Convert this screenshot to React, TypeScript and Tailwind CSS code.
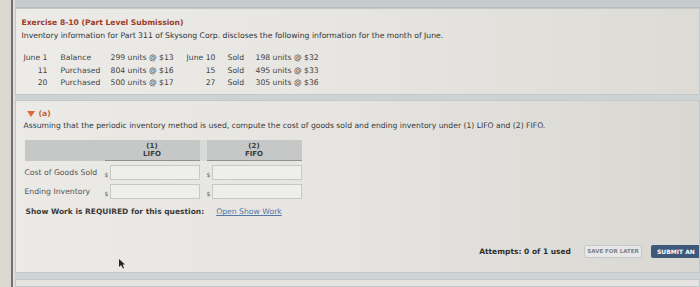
import React from "react";

const font = { fontFamily: '"DejaVu Sans", Verdana, sans-serif' };

function DataRow({ a, b, c, d, e, f }: { a: string; b: string; c: string; d: string; e: string; f: string }) {
  return (
    <div className="grid grid-cols-[26px_63px_75px_30px_40px_auto] h-[12.5px] items-center">
      <div className="text-right">{a}</div>
      <div className="pl-[13px]">{b}</div>
      <div>{c}</div>
      <div className="text-right">{d}</div>
      <div className="pl-[12px]">{e}</div>
      <div>{f}</div>
    </div>
  );
}

function Input() {
  return <div className="w-[90px] h-[15px] bg-[#eeeeeb] border border-[#c6c9c7]" />;
}

export default function App() {
  return (
    <div
      className="relative w-[700px] h-[287px] overflow-hidden flex bg-[#d2d6d5] text-[#3a3a3a] text-[7.7px] leading-none"
      style={font}
    >
      <div className="w-[11px] bg-[#dbd8d1]" />
      <div className="w-[1.5px] bg-[#6e7273]" />
      <div className="w-[2px] bg-[#e0deda]" />
      <div className="flex-1 flex flex-col">
        <div className="h-[8px] bg-[#c5cdcc] border-b border-[#b6bfbe]" />
        {/* Panel 1 */}
        <div className="h-[87px] border border-[#c3c9c8] bg-gradient-to-r from-[#ecebe7] via-[#e6e5e1] to-[#dddbd6] pl-[6px] pt-[9px]">
          <div className="h-[10px] flex items-center text-[7.6px] font-bold text-[#9b3b2b]">
            Exercise 8-10 (Part Level Submission)
          </div>
          <div className="mt-[3px] h-[10px] flex items-center text-[#333]">
            Inventory information for Part 311 of Skysong Corp. discloses the following information for the month of June.
          </div>
          <div className="mt-[11px] text-[#444]">
            <DataRow a="June 1" b="Balance" c="299 units @ $13" d="June 10" e="Sold" f="198 units @ $32" />
            <DataRow a="11" b="Purchased" c="804 units @ $16" d="15" e="Sold" f="495 units @ $33" />
            <DataRow a="20" b="Purchased" c="500 units @ $17" d="27" e="Sold" f="305 units @ $36" />
          </div>
        </div>
        <div className="h-[5px] bg-[#cdd3d2]" />
        {/* Panel 2 */}
        <div className="h-[173px] border border-[#c3c9c8] bg-gradient-to-r from-[#ebeae6] via-[#e5e4e0] to-[#d9d7d2] pl-[8px] pr-[4px] pt-[8px] flex flex-col">
          <div className="h-[10px] flex items-center gap-[4px] pl-[3px]">
            <svg width="8" height="6" viewBox="0 0 8 6">
              <polygon points="0,0 8,0 4,6" fill="#e2683a" />
            </svg>
            <span className="font-bold text-[#c4613a]">(a)</span>
          </div>
          <div className="mt-[2px] h-[10px] flex items-center text-[#3a3a3a] text-[7.65px]">
            Assuming that the periodic inventory method is used, compute the cost of goods sold and ending inventory under (1) LIFO and (2) FIFO.
          </div>
          {/* table */}
          <div className="mt-[9px] w-[277px] ml-[1px]">
            <div className="h-[21px] bg-[#c5c8c6] flex">
              <div className="w-[80px]" />
              <div className="w-[95px] flex flex-col items-center justify-center gap-[1px] border-b border-[#8d9293] font-bold text-[#3c3c3c] text-[7px]">
                <span>(1)</span>
                <span>LIFO</span>
              </div>
              <div className="w-[7px] bg-[#d9dbd9]" />
              <div className="w-[95px] flex flex-col items-center justify-center gap-[1px] border-b border-[#8d9293] font-bold text-[#3c3c3c] text-[7px]">
                <span>(2)</span>
                <span>FIFO</span>
              </div>
            </div>
            <div className="mt-[4px] flex items-center h-[15px]">
              <div className="w-[80px] text-[#555]">Cost of Goods Sold</div>
              <span className="w-[5px] text-[6px] text-[#666] mt-[5px]">$</span>
              <Input />
              <span className="w-[5px] ml-[7px] text-[6px] text-[#666] mt-[5px]">$</span>
              <Input />
            </div>
            <div className="mt-[4px] flex items-center h-[15px]">
              <div className="w-[80px] text-[#555]">Ending Inventory</div>
              <span className="w-[5px] text-[6px] text-[#666] mt-[5px]">$</span>
              <Input />
              <span className="w-[5px] ml-[7px] text-[6px] text-[#666] mt-[5px]">$</span>
              <Input />
            </div>
          </div>
          <div className="mt-[8px] h-[10px] flex items-center pl-[2px]">
            <span className="font-bold text-[#3a3a3a] text-[7.5px]">Show Work is REQUIRED for this question:</span>
            <span className="ml-[12px] underline text-[#5677a6]">Open Show Work</span>
          </div>
          <div className="mt-[28px] flex items-center justify-end pr-0 mr-[-4px]">
            <span className="font-bold text-[#2f2f2f] text-[7.5px]">Attempts: 0 of 1 used</span>
            <div className="ml-[13px] h-[13px] w-[58px] bg-[#e6e7e6] border border-[#c6c8c8] rounded-[2px] flex items-center justify-center text-[5.5px] font-bold text-[#7c8288]">
              SAVE FOR LATER
            </div>
            <div className="ml-[9px] h-[13px] w-[48px] bg-[#3d5878] rounded-l-[2px] flex items-center pl-[6px] text-[6px] font-bold text-white whitespace-nowrap overflow-hidden">
              SUBMIT AN
            </div>
          </div>
        </div>
        <div className="h-[6px] bg-[#cfd5d4]" />
        <div className="flex-1 border border-[#c3c9c8] bg-[#e5e4e0]" />
      </div>
      {/* mouse cursor overlay */}
      <svg className="absolute left-[119px] top-[259px]" width="7" height="10" viewBox="0 0 7 10">
        <polygon points="0,0 0,8 2,6 4,9.5 5,9 3.5,5.5 6,5.5" fill="#222" />
      </svg>
    </div>
  );
}
